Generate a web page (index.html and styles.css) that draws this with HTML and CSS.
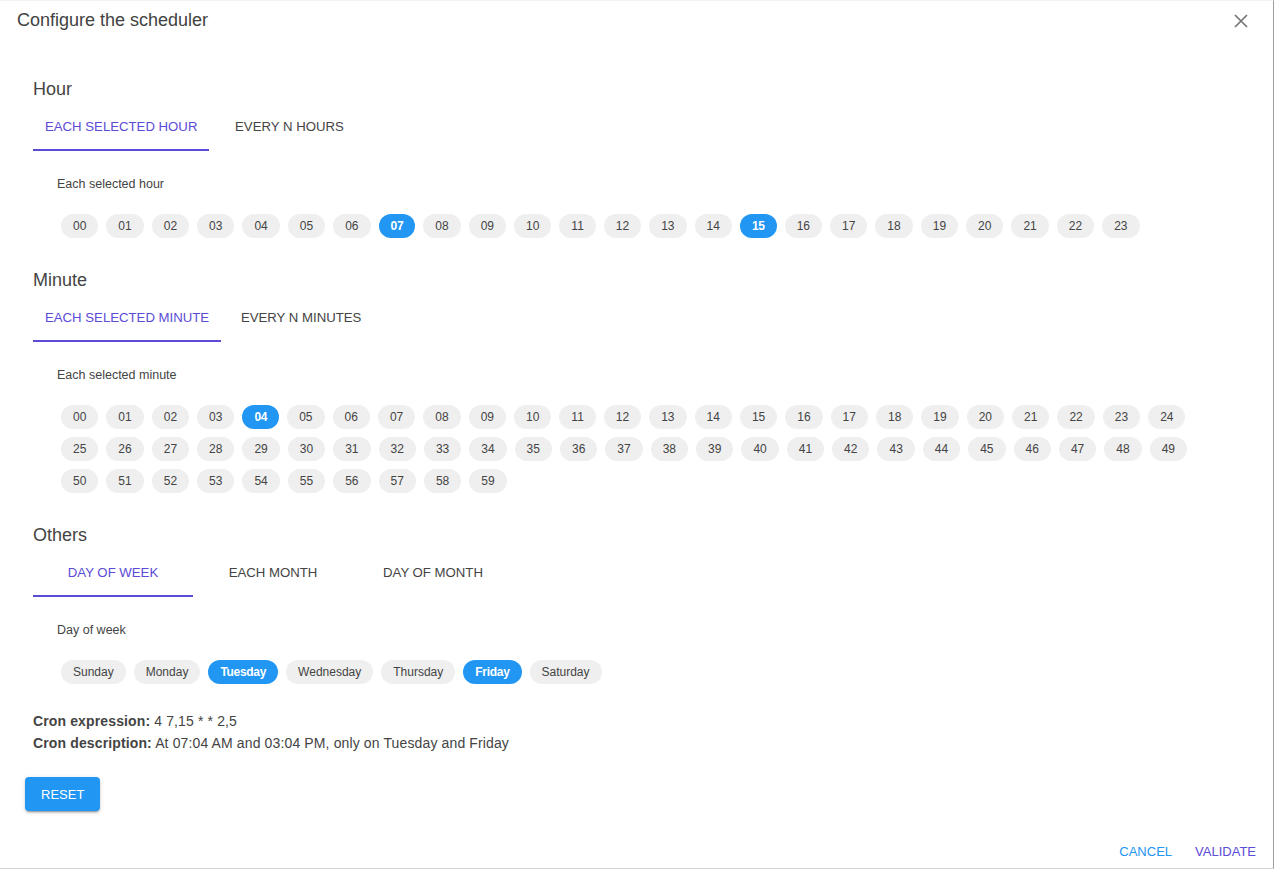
FILE: index.html
```html
<!DOCTYPE html>
<html lang="en">
<head>
<meta charset="utf-8">
<title>Configure the scheduler</title>
<link rel="stylesheet" href="styles.css">
</head>
<body>
<div class="dialog">
  <div class="header">
    <div class="title">Configure the scheduler</div>
    <button class="close" aria-label="Close">
      <svg width="14" height="14" viewBox="0 0 14 14"><path d="M1 1L13 13M13 1L1 13" stroke="#757575" stroke-width="1.7" fill="none"/></svg>
    </button>
  </div>
  <div class="content">
    <section class="section">
      <h2 class="heading">Hour</h2>
      <div class="tabs">
        <div class="tab active">EACH SELECTED HOUR</div>
        <div class="tab">EVERY N HOURS</div>
      </div>
      <div class="panel">
        <div class="label">Each selected hour</div>
        <div class="chips" id="hours"></div>
      </div>
    </section>
    <section class="section">
      <h2 class="heading">Minute</h2>
      <div class="tabs">
        <div class="tab active">EACH SELECTED MINUTE</div>
        <div class="tab">EVERY N MINUTES</div>
      </div>
      <div class="panel">
        <div class="label">Each selected minute</div>
        <div class="chips" id="minutes"></div>
      </div>
    </section>
    <section class="section">
      <h2 class="heading">Others</h2>
      <div class="tabs">
        <div class="tab active">DAY OF WEEK</div>
        <div class="tab">EACH MONTH</div>
        <div class="tab">DAY OF MONTH</div>
      </div>
      <div class="panel">
        <div class="label">Day of week</div>
        <div class="chips">
          <span class="chip">Sunday</span><span class="chip">Monday</span><span class="chip selected">Tuesday</span><span class="chip">Wednesday</span><span class="chip">Thursday</span><span class="chip selected">Friday</span><span class="chip">Saturday</span>
        </div>
      </div>
    </section>
    <div class="cron">
      <div><b>Cron expression:</b> 4 7,15 * * 2,5</div>
      <div><b>Cron description:</b> At 07:04 AM and 03:04 PM, only on Tuesday and Friday</div>
    </div>
    <button class="reset">RESET</button>
  </div>
  <div class="actions">
    <button class="text-btn cancel">CANCEL</button>
    <button class="text-btn validate">VALIDATE</button>
  </div>
</div>
<script>
  function fill(id, n, sel) {
    var el = document.getElementById(id);
    for (var i = 0; i < n; i++) {
      var s = document.createElement('span');
      s.className = 'chip' + (sel.indexOf(i) >= 0 ? ' selected' : '');
      s.textContent = (i < 10 ? '0' : '') + i;
      el.appendChild(s);
    }
  }
  fill('hours', 24, [7, 15]);
  fill('minutes', 60, [4]);
</script>
</body>
</html>
```

FILE: styles.css
```css
* { box-sizing: border-box; }
html, body { margin: 0; padding: 0; background: #fff; }
body { font-family: "Liberation Sans", Arial, sans-serif; color: #444; }

.dialog {
  width: 1274px;
  height: 869px;
  border-right: 1px solid #9e9e9e;
  border-bottom: 1px solid #d6d6d6;
  border-top: 1px solid #f2f2f2;
  display: flex;
  flex-direction: column;
}

.header {
  height: 39px;
  display: flex;
  align-items: center;
  justify-content: space-between;
  padding: 0 25px 0 17px;
}
.title { font-size: 18px; color: #424242; }
.close {
  border: 0; background: none; padding: 0; width: 14px; height: 14px;
  display: flex; cursor: pointer; margin-top: 1px;
}

.content { padding: 0 25px; }
.section { padding: 0 8px; }
.heading {
  margin: 35px 0 0 0;
  font-size: 18px;
  font-weight: 400;
  line-height: 28px;
  color: #444;
}
.section + .section .heading { margin-top: 24px; }

.tabs { display: flex; height: 48px; }
.tab {
  min-width: 160px;
  padding: 0 12px;
  height: 48px;
  display: flex;
  align-items: center;
  justify-content: center;
  font-size: 13.2px;
  color: #444;
  border-bottom: 2px solid transparent;
}
.tab.active { color: #5b4bd6; border-bottom-color: #5b4bd6; }

.panel { padding-left: 24px; }
.label { margin-top: 23px; font-size: 12.5px; line-height: 20px; color: #444; }

.chips {
  display: flex;
  flex-wrap: wrap;
  margin-top: 16px;
  max-width: 1150px;
}
.chip {
  height: 24px;
  line-height: 24px;
  padding: 0 12px;
  margin: 4px;
  border-radius: 12px;
  background: #efefef;
  font-size: 12px;
  color: #444;
}
.chip.selected { background: #2196f3; color: #fff; font-weight: 700; letter-spacing: -0.3px; }

.cron {
  margin-top: 22px;
  padding: 0 8px;
  font-size: 14px;
  line-height: 22px;
  letter-spacing: 0.13px;
  color: #444;
}
.cron b { font-weight: 700; }

.reset {
  margin-top: 23px;
  height: 34px;
  padding: 0 16px;
  border: 0;
  border-radius: 4px;
  background: #2196f3;
  color: #fff;
  font-family: inherit;
  font-size: 13px;
  box-shadow: 0 3px 1px -2px rgba(0,0,0,.2), 0 2px 2px 0 rgba(0,0,0,.14), 0 1px 5px 0 rgba(0,0,0,.12);
}

.actions {
  margin-top: auto;
  display: flex;
  justify-content: flex-end;
  padding-right: 5px;
}
.text-btn {
  height: 34px;
  padding: 0 12px;
  border: 0;
  background: none;
  font-family: inherit;
  font-size: 13px;
}
.cancel { color: #2196f3; margin-right: -1px; }
.validate { color: #5b4bd6; }
```
